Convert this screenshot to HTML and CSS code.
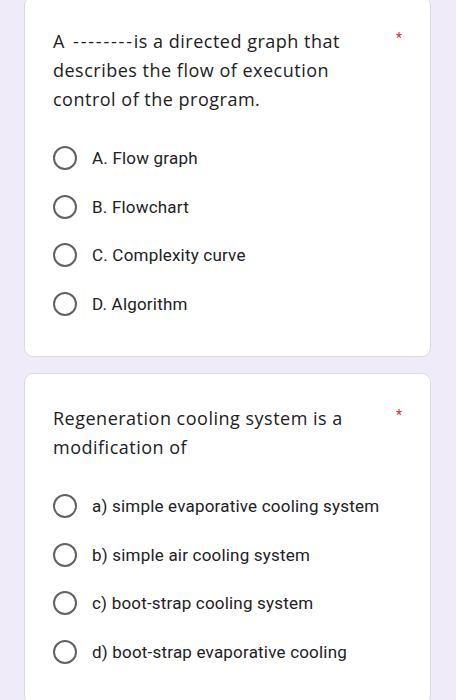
FILE: index.html
```html
<!DOCTYPE html>
<html lang="en">
<head>
<meta charset="utf-8">
<title>Form</title>
<link rel="stylesheet" href="styles.css">
</head>
<body>
<main class="form">
  <section class="card card-first">
    <div class="question">
      <div class="title">A <span class="dashes">--------</span>is a directed graph that describes the flow of execution control of the program.</div>
      <span class="required">*</span>
    </div>
    <div class="options">
      <label class="option"><span class="radio"></span><span class="label">A. Flow graph</span></label>
      <label class="option"><span class="radio"></span><span class="label">B. Flowchart</span></label>
      <label class="option"><span class="radio"></span><span class="label">C. Complexity curve</span></label>
      <label class="option"><span class="radio"></span><span class="label">D. Algorithm</span></label>
    </div>
  </section>
  <section class="card">
    <div class="question">
      <div class="title">Regeneration cooling system is a modification of</div>
      <span class="required">*</span>
    </div>
    <div class="options">
      <label class="option"><span class="radio"></span><span class="label">a) simple evaporative cooling system</span></label>
      <label class="option"><span class="radio"></span><span class="label">b) simple air cooling system</span></label>
      <label class="option"><span class="radio"></span><span class="label">c) boot-strap cooling system</span></label>
      <label class="option"><span class="radio"></span><span class="label">d) boot-strap evaporative cooling</span></label>
    </div>
  </section>
</main>
</body>
</html>
```
FILE: styles.css
```css
html, body {
  margin: 0;
  padding: 0;
  background: #f0ebf8;
}
body {
  font-family: Roboto, "Liberation Sans", sans-serif;
  color: #202124;
  overflow: hidden;
}
.form {
  display: flex;
  flex-direction: column;
  gap: 16px;
  padding: 0 25px 0 24px;
}
.card {
  background: #fff;
  border: 1px solid #dadce0;
  border-radius: 9px;
  padding: 30px 28px 28px 28px;
}
.card-first {
  margin-top: -4px;
}
.question {
  display: flex;
  align-items: flex-start;
}
.title {
  flex: 1;
  font-family: "Open Sans", Roboto, sans-serif;
  font-size: 18px;
  line-height: 29px;
  letter-spacing: 0.5px;
  padding-right: 24px;
}
.dashes {
  letter-spacing: 1.8px;
  padding-left: 3px;
}
.required {
  color: #d93025;
  font-size: 14px;
  line-height: 22px;
  width: 14px;
  text-align: center;
  margin-right: -4px;
}
.options {
  margin-top: 20px;
  display: flex;
  flex-direction: column;
}
.option {
  display: flex;
  align-items: center;
  height: 48.5px;
  gap: 15px;
  font-size: 17px;
  letter-spacing: 0.2px;
}
.radio {
  width: 24px;
  height: 24px;
  box-sizing: border-box;
  border: 2.6px solid #5f6368;
  border-radius: 50%;
  flex: none;
}
```
